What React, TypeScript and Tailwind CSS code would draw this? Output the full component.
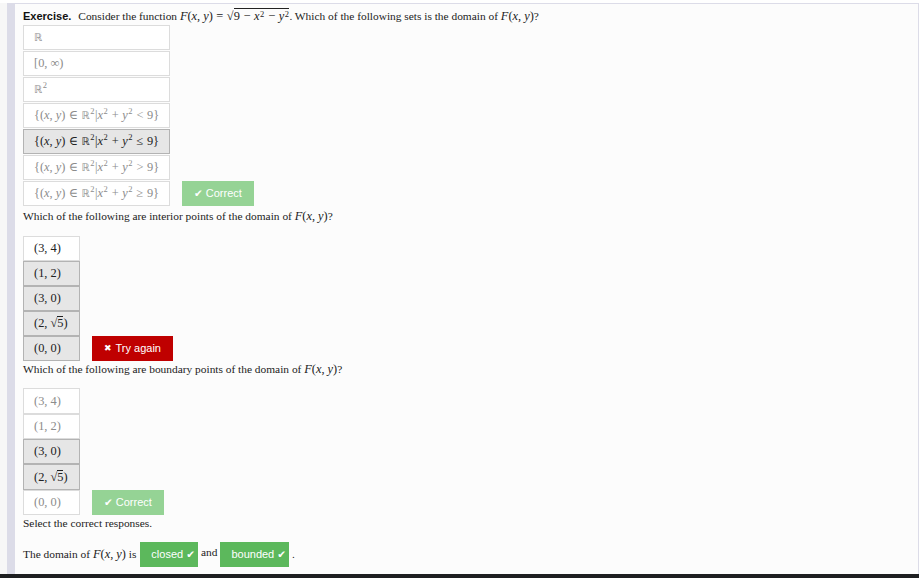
import React from "react";

const serif = { fontFamily: '"Liberation Serif", "DejaVu Serif", serif' };

const I = ({ children }: { children: React.ReactNode }) => <span className="italic">{children}</span>;
const M = ({ children }: { children: React.ReactNode }) => <span className="text-[12.4px]">{children}</span>;
const Sup = ({ children, low }: { children: React.ReactNode; low?: boolean }) => (
  <span className={`text-[8.5px] relative leading-none ml-[0.5px] mr-[0.5px] ${low ? "-top-[3px]" : "-top-[5px]"}`}>
    {children}
  </span>
);
const Op = ({ c }: { c: string }) => <span className="mx-[3.5px]">{c}</span>;
const R = () => (
  <span style={{ fontFamily: '"DejaVu Sans", sans-serif' }} className="text-[10.5px]">
    ℝ
  </span>
);

const Fxy = () => (
  <M>
    <I>F</I>(<I>x</I>,<span className="ml-[3px]" /><I>y</I>)
  </M>
);

const SetOf = ({ rel }: { rel: string }) => (
  <M>
    {"{"}(<I>x</I>,<span className="ml-[3px]" /><I>y</I>)<Op c="∈" />
    <R />
    <Sup>2</Sup>|<I>x</I>
    <Sup>2</Sup>
    <Op c="+" />
    <I>y</I>
    <Sup>2</Sup>
    <Op c={rel} />
    9{"}"}
  </M>
);

const Pt = ({ a, b }: { a: string; b: string }) => (
  <M>
    ({a},<span className="ml-[3px]" />
    {b})
  </M>
);

const Root5 = () => (
  <M>
    (2,<span className="ml-[3px]" />√<span className="border-t border-current leading-[12px] inline-block">5</span>)
  </M>
);

type Opt = { label: React.ReactNode; on: boolean; dark?: boolean; h?: string };

const Option = ({ o, w }: { o: Opt; w: string }) => (
  <div
    className={`${w} ${o.h ?? "h-[25px]"} flex items-center pl-[10px] border ${
      o.on ? "bg-[#e6e6e6] border-[#b3b3b3]" : "bg-white border-[#dcdcdc]"
    } ${!o.on && !o.dark ? "text-[#8c8c8c]" : "text-[#222]"}`}
  >
    {o.label}
  </div>
);

const Badge = ({
  kind,
  children,
  tight,
}: {
  kind: "ok" | "bad" | "solid";
  children: React.ReactNode;
  tight?: boolean;
}) => {
  const bg = kind === "ok" ? "bg-[#95d395]" : kind === "bad" ? "bg-[#bf0000]" : "bg-[#5cb85c]";
  return (
    <div
      className={`${bg} h-[25px] flex items-center justify-center text-white text-[11px] ${
        tight ? "pl-[11px] pr-[3px]" : "px-[12px]"
      }`}
      style={{ fontFamily: '"Liberation Sans", Arial, sans-serif' }}
    >
      {children}
    </div>
  );
};

const Check = () => (
  <span style={{ fontFamily: '"DejaVu Sans", sans-serif' }} className="text-[10.5px]">
    ✔
  </span>
);

const OptionList = ({
  opts,
  w,
  badge,
  gap,
}: {
  opts: Opt[];
  w: string;
  badge: React.ReactNode;
  gap?: boolean;
}) => (
  <div className="flex flex-col">
    {opts.map((o, i) => (
      <div key={i} className={`flex items-end gap-[12px] ${gap ? "mb-[1px]" : ""}`}>
        <Option o={o} w={w} />
        {i === opts.length - 1 && badge}
      </div>
    ))}
  </div>
);

export default function App() {
  const domainOpts: Opt[] = [
    { label: <M><R /></M>, on: false },
    { label: <M>[0,<span className="ml-[3px]" />∞)</M>, on: false },
    { label: <M><R /><Sup>2</Sup></M>, on: false },
    { label: <SetOf rel="<" />, on: false },
    { label: <SetOf rel="≤" />, on: true },
    { label: <SetOf rel=">" />, on: false },
    { label: <SetOf rel="≥" />, on: false },
  ];
  const interior: Opt[] = [
    { label: <Pt a="3" b="4" />, on: false, dark: true },
    { label: <Pt a="1" b="2" />, on: true },
    { label: <Pt a="3" b="0" />, on: true },
    { label: <Root5 />, on: true },
    { label: <Pt a="0" b="0" />, on: true },
  ];
  const boundary: Opt[] = [
    { label: <Pt a="3" b="4" />, on: false, h: "h-[26px]" },
    { label: <Pt a="1" b="2" />, on: false },
    { label: <Pt a="3" b="0" />, on: true },
    { label: <Root5 />, on: true, h: "h-[26px]" },
    { label: <Pt a="0" b="0" />, on: false },
  ];

  return (
    <div className="h-[578px] w-[919px] bg-[#fafafa] flex flex-col overflow-hidden" style={serif}>
      <div className="h-[3px] bg-white shrink-0" />
      <div className="flex-1 flex min-h-0">
        <div className="w-[7px] bg-[#f7f7f7]" />
        <div className="w-[8px] bg-[#dcdce8]" />
        <div className="flex-1 border-t border-r border-[#dcdce8] bg-[#fcfcfc] pl-[8px] text-[#222] text-[11.4px]">
          <div className="h-[21px] pt-[3px] flex items-center">
            <span
              className="font-bold text-[11px] mr-[7px] text-[#111]"
              style={{ fontFamily: '"Liberation Sans", Arial, sans-serif' }}
            >
              Exercise.
            </span>
            <span>
              Consider the function <Fxy />
              <M>
                <Op c="=" />
                √
                <span className="border-t border-[#222] inline-block leading-[13px] pt-[1px]">
                  9<Op c="−" />
                  <I>x</I>
                  <Sup low>2</Sup>
                  <Op c="−" />
                  <I>y</I>
                  <Sup low>2</Sup>
                </span>
              </M>
              . Which of the following sets is the domain of <Fxy />?
            </span>
          </div>
          <OptionList
            opts={domainOpts}
            w="w-[147px]"
            gap
            badge={
              <Badge kind="ok">
                <Check />
                <span className="ml-[3px]">Correct</span>
              </Badge>
            }
          />
          <div className="h-[16px] leading-[16px] mt-[1px]">
            Which of the following are interior points of the domain of <Fxy />?
          </div>
          <div className="h-[12px]" />
          <OptionList
            opts={interior}
            w="w-[57px]"
            badge={
              <Badge kind="bad">
                <span style={{ fontFamily: '"DejaVu Sans", sans-serif' }} className="text-[9px]">
                  ✖
                </span>
                <span className="ml-[4px]">Try again</span>
              </Badge>
            }
          />
          <div className="h-[16px] leading-[16px]">
            Which of the following are boundary points of the domain of <Fxy />?
          </div>
          <div className="h-[11px]" />
          <OptionList
            opts={boundary}
            w="w-[57px]"
            badge={
              <Badge kind="ok">
                <Check />
                <span className="ml-[3px]">Correct</span>
              </Badge>
            }
          />
          <div className="h-[16px] leading-[16px]">Select the correct responses.</div>
          <div className="h-[11px]" />
          <div className="flex items-center h-[25px]">
            <span className="mr-[4px]">
              The domain of <Fxy /> is
            </span>
            <Badge kind="solid" tight>
              <span>closed</span>
              <span className="ml-[3px]">
                <Check />
              </span>
            </Badge>
            <span className="mx-[3px] -mt-[4px]">and</span>
            <Badge kind="solid" tight>
              <span>bounded</span>
              <span className="ml-[3px]">
                <Check />
              </span>
            </Badge>
            <span className="ml-[3px]">.</span>
          </div>
        </div>
      </div>
      <div className="h-[4px] bg-[#1e1f21] shrink-0" />
    </div>
  );
}
